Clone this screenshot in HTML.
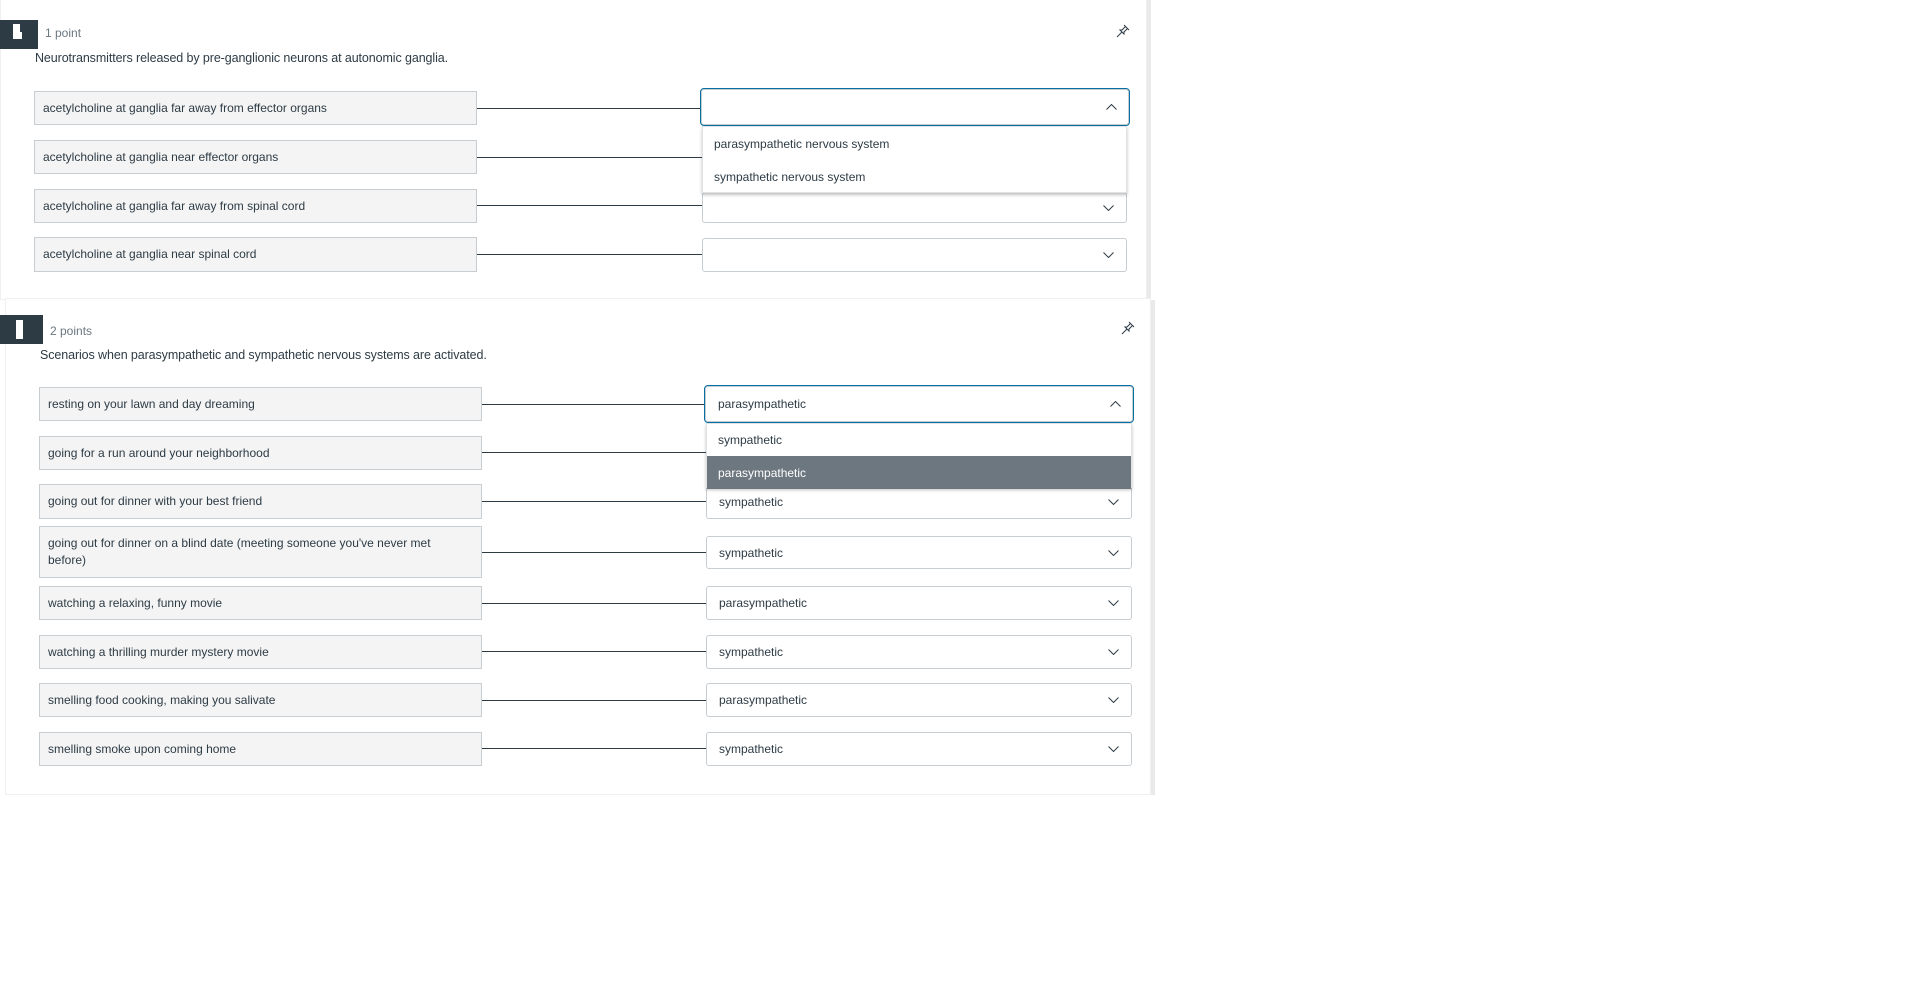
<!DOCTYPE html>
<html><head><meta charset="utf-8"><style>
*{box-sizing:border-box;margin:0;padding:0}
body{width:1914px;height:981px;background:#fff;font-family:"Liberation Sans",sans-serif;color:#2d3b45;position:relative;overflow:hidden}
.a{position:absolute}
.card{position:absolute;border:1px solid #f0f0f0;background:#fff}
.badge{position:absolute;background:#2d3b45}
.pts{position:absolute;font-size:12px;color:#6b7780}
.q{position:absolute;font-size:12.5px;color:#2d3b45;letter-spacing:-0.1px}
.box{position:absolute;background:#f4f4f4;border:1px solid #c7cdd1;font-size:12px;padding:0 8px;display:flex;align-items:center;line-height:17px;color:#2d3b45}
.line{position:absolute;height:1px;background:#2d3b45}
.sel{position:absolute;background:#fff;border:1px solid #c7cdd1;border-radius:3px;font-size:12px;padding-left:12px;display:flex;align-items:center}
.sel.open{border:1px solid #0770a3;box-shadow:inset 0 0 0 1px #c7cdd1;border-radius:4px}
.chev{position:absolute;right:12px;top:50%;width:11px;height:6px;margin-top:-3px}
.menu{position:absolute;background:#fff;box-shadow:0 2px 3px rgba(0,0,0,.25);border:1px solid #e0e3e5;font-size:12px}
.menu div{height:33px;display:flex;align-items:center;padding-left:11px}
.grey{position:absolute;background:#eaeaea}
</style></head><body>
<div class="grey" style="left:1146px;top:0;width:5px;height:300px"></div>
<div class="grey" style="left:1151px;top:300px;width:4px;height:495px"></div>
<div class="card" style="left:0;top:0;width:1147px;height:300px;border-top:none"></div>
<div class="card" style="left:5px;top:298px;width:1146px;height:497px"></div>

<div class="badge" style="left:0;top:20px;width:38px;height:29px"></div>
<div class="a" style="left:13px;top:24px;width:7px;height:15px;background:#fff"></div>
<div class="a" style="left:20px;top:32px;width:2px;height:7px;background:#fff"></div>
<div class="pts" style="left:45px;top:26px">1 point</div>
<svg class="a" style="left:1115px;top:23px" width="16" height="16" viewBox="0 0 16 16" fill="none" stroke="#2d3b45" stroke-width="1"><path d="M9 2l5 5M10.5 3.5L7 7l-2 0 4 4 0-2 3.5-3.5M7 9l-5 5"/></svg>
<div class="q" style="left:35px;top:51px">Neurotransmitters released by pre-ganglionic neurons at autonomic ganglia.</div>

<div class="box" style="left:34px;top:91px;width:443px;height:34px">acetylcholine at ganglia far away from effector organs</div>
<div class="box" style="left:34px;top:140px;width:443px;height:34px">acetylcholine at ganglia near effector organs</div>
<div class="box" style="left:34px;top:189px;width:443px;height:34px">acetylcholine at ganglia far away from spinal cord</div>
<div class="box" style="left:34px;top:237px;width:443px;height:35px">acetylcholine at ganglia near spinal cord</div>
<div class="line" style="left:477px;top:108px;width:225px"></div>
<div class="line" style="left:477px;top:157px;width:225px"></div>
<div class="line" style="left:477px;top:205px;width:225px"></div>
<div class="line" style="left:477px;top:254px;width:225px"></div>

<div class="sel" style="left:702px;top:192px;width:425px;height:31px"><svg class="chev" viewBox="0 0 11 6"><path d="M.5 .5l5 5 5-5" fill="none" stroke="#2d3b45" stroke-width="1"/></svg></div>
<div class="sel" style="left:702px;top:238px;width:425px;height:34px"><svg class="chev" viewBox="0 0 11 6"><path d="M.5 .5l5 5 5-5" fill="none" stroke="#2d3b45" stroke-width="1"/></svg></div>
<div class="sel open" style="left:700px;top:88px;width:430px;height:38px"><svg class="chev" viewBox="0 0 11 6"><path d="M.5 5.5l5-5 5 5" fill="none" stroke="#2d3b45" stroke-width="1"/></svg></div>
<div class="menu" style="left:702px;top:126px;width:425px;height:67px"><div>parasympathetic nervous system</div><div>sympathetic nervous system</div></div>

<div class="badge" style="left:0;top:315px;width:43px;height:29px"></div>
<div class="a" style="left:16px;top:320px;width:7px;height:19px;background:#fff"></div>
<div class="pts" style="left:50px;top:324px">2 points</div>
<svg class="a" style="left:1120px;top:320px" width="16" height="16" viewBox="0 0 16 16" fill="none" stroke="#2d3b45" stroke-width="1"><path d="M9 2l5 5M10.5 3.5L7 7l-2 0 4 4 0-2 3.5-3.5M7 9l-5 5"/></svg>
<div class="q" style="left:40px;top:348px">Scenarios when parasympathetic and sympathetic nervous systems are activated.</div>

<div class="box" style="left:39px;top:387px;width:443px;height:34px">resting on your lawn and day dreaming</div>
<div class="box" style="left:39px;top:436px;width:443px;height:34px">going for a run around your neighborhood</div>
<div class="box" style="left:39px;top:484px;width:443px;height:35px">going out for dinner with your best friend</div>
<div class="box" style="left:39px;top:526px;width:443px;height:52px;padding-right:24px">going out for dinner on a blind date (meeting someone you've never met before)</div>
<div class="box" style="left:39px;top:586px;width:443px;height:34px">watching a relaxing, funny movie</div>
<div class="box" style="left:39px;top:635px;width:443px;height:34px">watching a thrilling murder mystery movie</div>
<div class="box" style="left:39px;top:683px;width:443px;height:34px">smelling food cooking, making you salivate</div>
<div class="box" style="left:39px;top:732px;width:443px;height:34px">smelling smoke upon coming home</div>
<div class="line" style="left:482px;top:404px;width:224px"></div>
<div class="line" style="left:482px;top:452px;width:224px"></div>
<div class="line" style="left:482px;top:501px;width:224px"></div>
<div class="line" style="left:482px;top:552px;width:224px"></div>
<div class="line" style="left:482px;top:603px;width:224px"></div>
<div class="line" style="left:482px;top:651px;width:224px"></div>
<div class="line" style="left:482px;top:700px;width:224px"></div>
<div class="line" style="left:482px;top:748px;width:224px"></div>

<div class="sel" style="left:706px;top:484px;width:426px;height:35px">sympathetic<svg class="chev" viewBox="0 0 11 6"><path d="M.5 .5l5 5 5-5" fill="none" stroke="#2d3b45" stroke-width="1"/></svg></div>
<div class="sel" style="left:706px;top:536px;width:426px;height:33px">sympathetic<svg class="chev" viewBox="0 0 11 6"><path d="M.5 .5l5 5 5-5" fill="none" stroke="#2d3b45" stroke-width="1"/></svg></div>
<div class="sel" style="left:706px;top:586px;width:426px;height:34px">parasympathetic<svg class="chev" viewBox="0 0 11 6"><path d="M.5 .5l5 5 5-5" fill="none" stroke="#2d3b45" stroke-width="1"/></svg></div>
<div class="sel" style="left:706px;top:635px;width:426px;height:34px">sympathetic<svg class="chev" viewBox="0 0 11 6"><path d="M.5 .5l5 5 5-5" fill="none" stroke="#2d3b45" stroke-width="1"/></svg></div>
<div class="sel" style="left:706px;top:683px;width:426px;height:34px">parasympathetic<svg class="chev" viewBox="0 0 11 6"><path d="M.5 .5l5 5 5-5" fill="none" stroke="#2d3b45" stroke-width="1"/></svg></div>
<div class="sel" style="left:706px;top:732px;width:426px;height:34px">sympathetic<svg class="chev" viewBox="0 0 11 6"><path d="M.5 .5l5 5 5-5" fill="none" stroke="#2d3b45" stroke-width="1"/></svg></div>
<div class="sel open" style="left:704px;top:385px;width:430px;height:38px;padding-left:13px">parasympathetic<svg class="chev" viewBox="0 0 11 6"><path d="M.5 5.5l5-5 5 5" fill="none" stroke="#2d3b45" stroke-width="1"/></svg></div>
<div class="menu" style="left:706px;top:423px;width:426px;height:65px"><div style="height:32px">sympathetic</div><div style="background:#6c7780;color:#fff">parasympathetic</div></div>
</body></html>
